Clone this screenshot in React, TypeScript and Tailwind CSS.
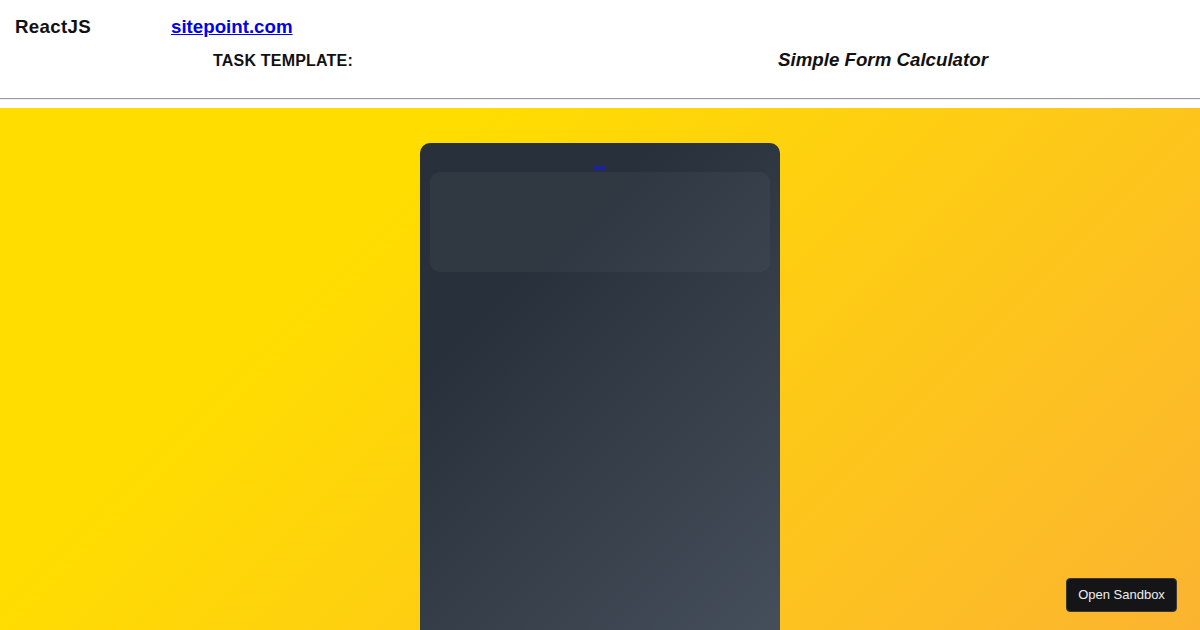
import React from "react";

export default function App() {
  return (
    <div className="bg-white text-[#111111]" style={{ fontFamily: '"Liberation Sans", Arial, sans-serif' }}>
      <header>
        <div className="flex items-baseline pt-[13px]">
          <h3 className="ml-[15px] w-[156px] text-[18.72px] font-bold leading-[28px] tracking-[0.3px]">ReactJS</h3>
          <a href="#" className="text-[18.72px] font-bold leading-[28px] text-[#0000ee] underline">
            sitepoint.com
          </a>
        </div>
        <div className="mt-[5px] flex items-baseline">
          <h4 className="ml-[213px] w-[565px] text-[16px] font-bold leading-[24px] tracking-[0.2px]">TASK TEMPLATE:</h4>
          <h3 className="text-[18.72px] font-bold italic leading-[28px]">Simple Form Calculator</h3>
        </div>
      </header>
      <hr className="mt-[24px] mb-[8px] h-[2px] border-0 border-t border-b border-t-[#9a9a9a] border-b-[#eeeeee]" />
      <main className="bg-[linear-gradient(315deg,#fbb034_0%,#ffdd00_74%)] pt-[35px] pb-[40px]">
        <div className="mx-auto h-[560px] w-[360px] rounded-[10px] bg-[linear-gradient(315deg,#48525e_0%,#28313b_74%)] pt-[24px]">
          <div className="mx-auto h-[2px] w-[12px] bg-[#1414ff]" />
          <div className="mx-[10px] mt-[3px] h-[100px] rounded-[10px] bg-white/[0.035]" />
        </div>
      </main>
      <button className="fixed right-[23px] bottom-[18px] flex h-[34px] w-[111px] items-center justify-center rounded-[4px] border border-[#3a3a3a] bg-[#151517] text-[13px] text-[#eeeeee]">
        Open Sandbox
      </button>
    </div>
  );
}
